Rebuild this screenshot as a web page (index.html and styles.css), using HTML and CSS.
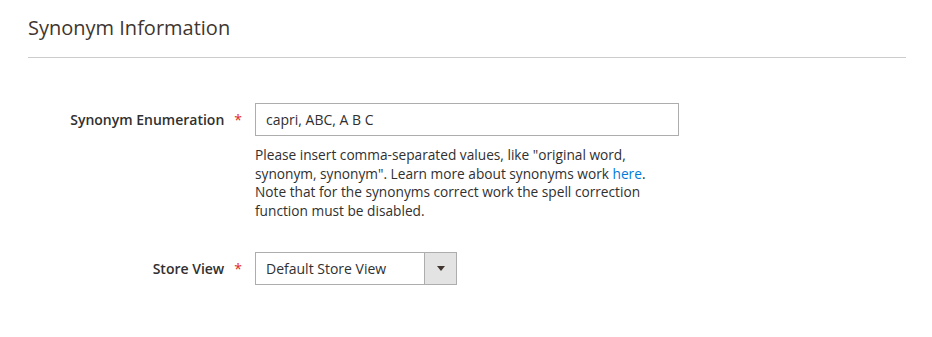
FILE: index.html
```html
<!DOCTYPE html>
<html>
<head>
<meta charset="utf-8">
<link rel="stylesheet" href="styles.css">
</head>
<body>
<div class="page">
  <fieldset class="fieldset">
    <div class="legend">Synonym Information</div>
    <div class="field field-first">
      <label class="label"><span>Synonym Enumeration</span></label>
      <div class="control">
        <input class="input" type="text" value="capri, ABC, A B C">
        <div class="note">Please insert comma-separated values, like "original word, synonym, synonym". Learn more about synonyms work <a href="#">here</a>. Note that for the synonyms correct work the spell correction function must be disabled.</div>
      </div>
    </div>
    <div class="field">
      <label class="label"><span>Store View</span></label>
      <div class="control">
        <div class="select">
          <span class="select-value">Default Store View</span>
          <span class="select-btn"><span class="arrow"></span></span>
        </div>
      </div>
    </div>
  </fieldset>
</div>
</body>
</html>
```

FILE: styles.css
```css
* { box-sizing: border-box; }
html, body { margin: 0; padding: 0; background: #fff; }
body {
  font-family: "Open Sans", "Liberation Sans", sans-serif;
  color: #303030;
  font-size: 14px;
}
.page { padding: 15px 26px 0 28px; }
.fieldset { border: 0; margin: 0; padding: 0; }
.legend {
  font-size: 20px;
  font-weight: 400;
  color: #41362f;
  line-height: 26px;
  padding-bottom: 16px;
  border-bottom: 1px solid #cccccc;
  margin-bottom: 45px;
}
.field { display: flex; align-items: flex-start; margin-bottom: 31px; }
.label {
  width: 214px;
  text-align: right;
  font-weight: 600;
  font-size: 14px;
  line-height: 20px;
  padding-top: 7px;
  padding-right: 0;
  position: relative;
}
.label span::after {
  content: "*";
  color: #e22626;
  font-size: 14px;
  font-weight: 500;
  margin-left: 10px;
}
.control { margin-left: 13px; width: 424px; }
.input {
  display: block;
  width: 424px;
  height: 33px;
  border: 1px solid #adadad;
  padding: 0 10px;
  font-family: inherit;
  font-size: 14px;
  color: #303030;
  outline: none;
}
.note {
  margin-top: 10px;
  font-size: 13.7px;
  line-height: 18.7px;
  color: #303030;
  width: 410px;
}
.note a { color: #007bdb; text-decoration: none; }
.select {
  display: flex;
  width: 202px;
  height: 33px;
  border: 1px solid #adadad;
}
.select-value {
  flex: 1;
  padding-left: 10px;
  line-height: 31px;
  font-size: 14px;
}
.select-btn {
  width: 32px;
  background: #e3e3e3;
  border-left: 1px solid #adadad;
  display: flex;
  align-items: center;
  justify-content: center;
}
.arrow {
  width: 0; height: 0;
  border-left: 4px solid transparent;
  border-right: 4px solid transparent;
  border-top: 5px solid #41362f;
}
```
